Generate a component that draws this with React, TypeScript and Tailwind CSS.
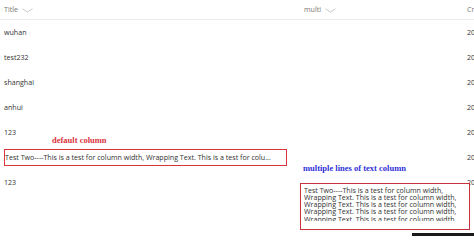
import React from 'react'

const ROWS = ['wuhan', 'test232', 'shanghai', 'anhui', '123']

const MULTI_TEXT =
  'Test Two----This is a test for column width, Wrapping Text. This is a test for column width, Wrapping Text. This is a test for column width, Wrapping Text. This is a test for column width, Wrapping Text. This is a test for column width, Wrapping Text. This is a test for column width,'

function Chevron() {
  return (
    <svg width="11" height="5" viewBox="0 0 11 5" className="ml-[4px] mt-[2px]">
      <polyline points="0.5,0.8 5.5,4 10.5,0.8" fill="none" stroke="#b3b0ad" strokeWidth="0.7" />
    </svg>
  )
}

function Row({ title, children }: { title: React.ReactNode; children?: React.ReactNode }) {
  return (
    <div className="flex h-[25px] items-center">
      <div className="w-[300px] shrink-0 pl-[4px]">{title}</div>
      <div className="w-[163px] shrink-0 pl-[4px]">{children}</div>
      <div className="shrink-0 pl-[4px] whitespace-nowrap">20</div>
    </div>
  )
}

export default function App() {
  return (
    <div
      className="relative w-[474px] h-[236px] overflow-hidden bg-white text-[7.1px] text-[#323130] antialiased"
      style={{ fontFamily: '"Open Sans", sans-serif' }}
    >
      <div className="flex h-[20px] items-center border-b border-[#edebe9] text-[#797775]">
        <div className="w-[300px] shrink-0 pl-[4px] flex items-center">
          Title
          <Chevron />
        </div>
        <div className="w-[163px] shrink-0 pl-[4px] flex items-center">
          multi
          <Chevron />
        </div>
        <div className="shrink-0 pl-[4px] whitespace-nowrap">Cr</div>
      </div>

      {ROWS.map((r, i) => (
        <Row key={i} title={r} />
      ))}

      <Row
        title={
          <div className="w-[283px] h-[17px] border border-[#d9333d] flex items-center whitespace-nowrap overflow-hidden">
            Test Two----This is a test for column width, Wrapping Text. This is a test for colu...
          </div>
        }
      />

      <div className="flex">
        <div className="w-[300px] shrink-0 pl-[4px] h-[25px] flex items-center">123</div>
        <div className="w-[163px] shrink-0">
          <div className="relative z-10 mt-[13px] w-[170px] h-[47px] border border-[#c8323c] bg-white pl-[3px] pr-[4px] pt-[2.5px]">
            <div className="h-[34px] overflow-hidden leading-[7.3px]">{MULTI_TEXT}</div>
          </div>
        </div>
        <div className="shrink-0 pl-[4px] h-[25px] flex items-center whitespace-nowrap">20</div>
      </div>

      <div
        className="absolute left-[52px] top-[134px] text-[8.5px] font-bold text-[#d9333d] whitespace-nowrap"
        style={{ fontFamily: '"Liberation Serif", serif' }}
      >
        default column
      </div>
      <div
        className="absolute left-[303px] top-[162px] text-[8.5px] font-bold text-[#3030d8] whitespace-nowrap"
        style={{ fontFamily: '"Liberation Serif", serif' }}
      >
        multiple lines of text column
      </div>

      <div className="absolute left-[412px] top-[233px] w-[62px] h-[3px] bg-[#1b1b1b]" />
    </div>
  )
}
